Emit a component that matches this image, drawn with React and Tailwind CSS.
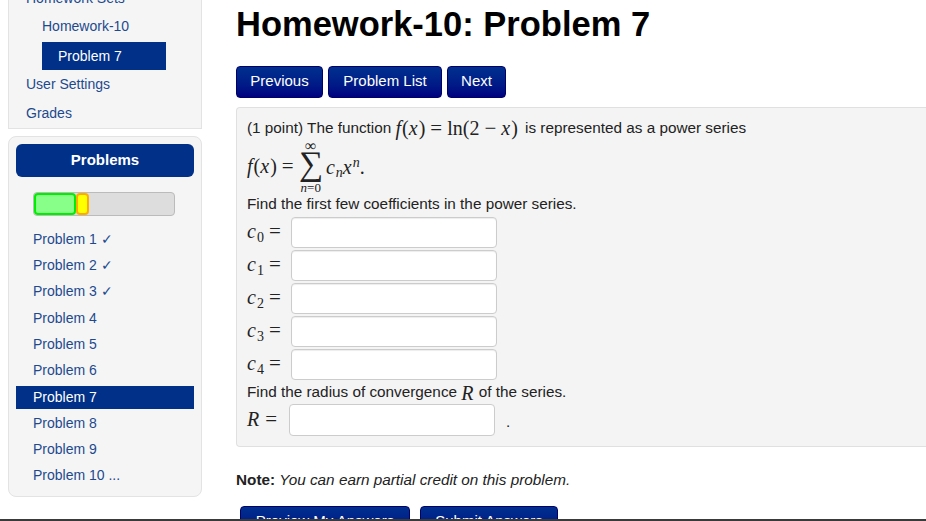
import React from 'react';

const sans = { fontFamily: '"Liberation Sans", Arial, sans-serif' };

const problems = [
  { label: 'Problem 1 ✓' },
  { label: 'Problem 2 ✓' },
  { label: 'Problem 3 ✓' },
  { label: 'Problem 4' },
  { label: 'Problem 5' },
  { label: 'Problem 6' },
  { label: 'Problem 7', active: true },
  { label: 'Problem 8' },
  { label: 'Problem 9' },
  { label: 'Problem 10 ...' },
];

const M = ({ children, className = '' }) => (
  <span className={`font-['Liberation_Serif',serif] text-[20px] whitespace-nowrap ${className}`}>{children}</span>
);

const I = ({ children }) => <i className="italic pr-[1px]">{children}</i>;
const Eq = ({ children = '=' }) => <span className="mx-[5px] text-[21px]">{children}</span>;

const Sidebar = () => (
  <div className="w-[194px] ml-2 shrink-0 -mt-[17px] text-[14px] text-[#1d4a8e]">
    <div className="border border-[#e3e3e3] bg-[#f5f5f5] pb-[1px]">
      <div className="h-[28px] flex items-center pl-[17px]">Homework Sets</div>
      <div className="h-[28px] flex items-center pl-[33px]">Homework-10</div>
      <div className="ml-[33px] w-[124px] h-[28px] mt-[2px] flex items-center pl-[16px] bg-[#003087] text-white">
        Problem 7
      </div>
      <div className="h-[29px] flex items-center pl-[17px]">User Settings</div>
      <div className="h-[28px] flex items-center pl-[17px]">Grades</div>
    </div>

    <div className="mt-[7px] border border-[#e3e3e3] bg-[#f5f5f5] rounded-lg px-[7px] pt-[7px] pb-[7px]">
      <div className="h-[33px] rounded-md bg-[#003087] text-white font-bold text-[15px] flex items-center justify-center">
        Problems
      </div>
      <div className="mt-[15px] ml-[17px] w-[142px] h-[24px] rounded-[4px] bg-[#dddddd] border border-[#bbbbbb] flex items-stretch">
        <div className="w-[42px] bg-[#88ff88] border-2 border-[#00ee00] rounded-[4px]"></div>
        <div className="w-[13px] bg-[#ffff00] border-2 border-[#ffaa00] rounded-[4px]"></div>
      </div>
      <div className="mt-[10px]">
        {problems.map((p) => (
          <div key={p.label} className="py-[1.67px]">
            <div
              className={`h-[23px] flex items-center pl-[17px] ${
                p.active ? 'bg-[#003087] text-white' : ''
              }`}
            >
              {p.label}
            </div>
          </div>
        ))}
      </div>
    </div>
  </div>
);

const NavBtn = ({ children, className = '' }) => (
  <button
    className={`h-[32px] rounded-[4px] bg-linear-to-b from-[#00308f] to-[#000080] text-white text-[15px] border border-[#000066] ${className}`}
  >
    {children}
  </button>
);

const AnswerRow = ({ sub }) => (
  <div className="flex items-center h-[31px] mb-[2px]">
    <div className="w-[44px]">
      <M>
        <I>c</I>
        <sub className="text-[14px] not-italic">{sub}</sub>
        <Eq />
      </M>
    </div>
    <input className="w-[206px] h-[31px] bg-white border border-[#cccccc] rounded-[4px] shadow-[inset_0_1px_1px_rgba(0,0,0,0.075)]" />
  </div>
);

export default function App() {
  return (
    <div className="h-[521px] overflow-hidden bg-white border-b-2 border-[#3a3a3a] box-border" style={sans}>
      <div className="flex">
        <Sidebar />
        <div className="flex-1 ml-[34px] text-[#222]">
          <h1 className="text-[34.5px] font-bold text-black leading-none mt-[7px]">Homework-10: Problem 7</h1>
          <div className="flex gap-[5px] mt-[24px]">
            <NavBtn className="w-[87px]">Previous</NavBtn>
            <NavBtn className="w-[114px]">Problem List</NavBtn>
            <NavBtn className="w-[59px]">Next</NavBtn>
          </div>

          <div className="mt-[9px] bg-[#f4f4f4] border border-r-0 border-[#e0e0e0] rounded-l-[4px] pl-[10px] pt-[10px] pb-[10px] text-[15.3px]">
            <div className="h-[22px] flex items-center">
              (1 point) The function&nbsp;
              <M className="mr-[3px]">
                <I>f</I>(<I>x</I>)<Eq />ln(2<Eq>−</Eq><I>x</I>)
              </M>
              &nbsp;is represented as a power series
            </div>
            <div className="flex items-center h-[54px]">
              <M>
                <I>f</I>(<I>x</I>)<Eq />
              </M>
              <span className="flex flex-col items-center mr-[3px] font-['Liberation_Serif',serif] leading-none">
                <span className="text-[16px] h-[13px] leading-[12px]">∞</span>
                <span className="text-[34px] leading-[26px] h-[26px] -translate-y-[2px]">∑</span>
                <span className="text-[13px] italic h-[13px] leading-[13px] mt-[2px]">
                  n<span className="not-italic">=0</span>
                </span>
              </span>
              <M>
                <I>c</I>
                <sub className="text-[14px] italic">n</sub>
                <I>x</I>
                <sup className="text-[14px] italic">n</sup>.
              </M>
            </div>
            <div className="h-[22px] flex items-center">Find the first few coefficients in the power series.</div>
            <div className="mt-[1px]">
              <AnswerRow sub="0" />
              <AnswerRow sub="1" />
              <AnswerRow sub="2" />
              <AnswerRow sub="3" />
              <AnswerRow sub="4" />
            </div>
            <div className="h-[22px] flex items-center">
              Find the radius of convergence&nbsp;
              <M>
                <I>R</I>
              </M>
              &nbsp;of the series.
            </div>
            <div className="flex items-center h-[32px]">
              <div className="w-[42px]">
                <M>
                  <I>R</I>
                  <Eq />
                </M>
              </div>
              <input className="w-[206px] h-[32px] bg-white border border-[#cccccc] rounded-[4px]" />
              <span className="ml-[11px] mt-[6px]">.</span>
            </div>
          </div>

          <div className="mt-[22px] text-[15.3px] h-[20px]">
            <b>Note:</b> <i>You can earn partial credit on this problem.</i>
          </div>
          <div className="flex gap-[10px] mt-[17px] ml-[4px]">
            <NavBtn className="w-[170px]">Preview My Answers</NavBtn>
            <NavBtn className="w-[138px]">Submit Answers</NavBtn>
          </div>
        </div>
      </div>
    </div>
  );
}
